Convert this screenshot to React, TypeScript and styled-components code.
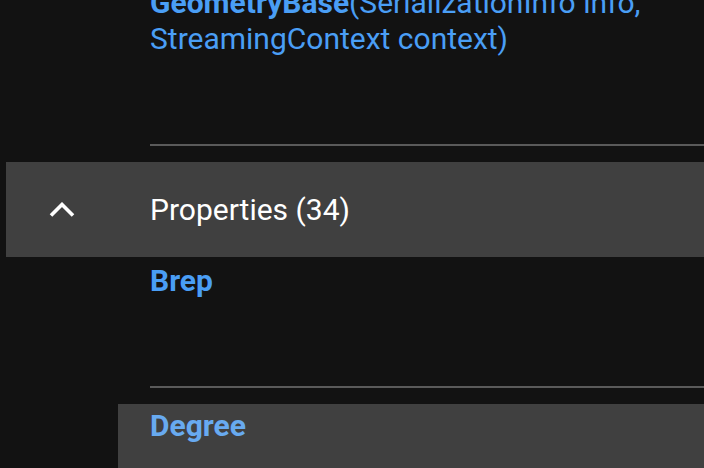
import styled, { createGlobalStyle } from "styled-components";

const GlobalStyle = createGlobalStyle`
    html, body {
        margin: 0;
        padding: 0;
        background-color: #121212;
        overflow: hidden;
    }
    body {
        font-family: Roboto, "Liberation Sans", sans-serif;
    }
`;

const Page = styled.div`
    width: 704px;
    height: 468px;
    overflow: hidden;
    display: flex;
    flex-direction: column;
    & > * {
        flex-shrink: 0;
    }
`;

const Member = styled.div<{ $active?: boolean }>`
    margin-left: ${(p) => (p.$active ? "118px" : "150px")};
    padding-left: ${(p) => (p.$active ? "32px" : "0")};
    padding-top: ${(p) => (p.$active ? "4px" : "2px")};
    background-color: ${(p) => (p.$active ? "#404040" : "transparent")};
`;

const MemberText = styled.div<{ $active?: boolean }>`
    font-size: 30px;
    line-height: 36px;
    color: ${(p) => (p.$active ? "#68aaf0" : "#4a9ef5")};
    padding-bottom: 87px;
    border-bottom: 2px solid #5a5a5a;
    padding-right: 40px;
`;

const Name = styled.span`
    font-weight: 700;
`;

const Header = styled.div`
    margin-left: 6px;
    height: 95px;
    background-color: #404040;
    display: flex;
    align-items: center;
`;

const Toggle = styled.div`
    width: 144px;
    padding-left: 43px;
    box-sizing: border-box;
    display: flex;
    align-items: center;
`;

const Title = styled.h2`
    margin: 0;
    font-size: 30px;
    font-weight: 400;
    color: #ffffff;
`;

export default function App() {
    return (
        <Page>
            <GlobalStyle />
            <Member style={{ marginTop: -17 }}>
                <MemberText>
                    <Name>GeometryBase</Name>(SerializationInfo info, StreamingContext context)
                </MemberText>
            </Member>
            <Header style={{ marginTop: 16 }}>
                <Toggle>
                    <svg width="26" height="16" viewBox="0 0 26 16">
                        <polyline points="2,13.5 13,2.5 24,13.5" fill="none" stroke="#fff" strokeWidth="3.6" />
                    </svg>
                </Toggle>
                <Title>Properties (34)</Title>
            </Header>
            <Member style={{ marginTop: 4 }}>
                <MemberText>
                    <Name>Brep</Name>
                </MemberText>
            </Member>
            <Member $active style={{ marginTop: 16 }}>
                <MemberText $active>
                    <Name>Degree</Name>
                </MemberText>
            </Member>
        </Page>
    );
}
